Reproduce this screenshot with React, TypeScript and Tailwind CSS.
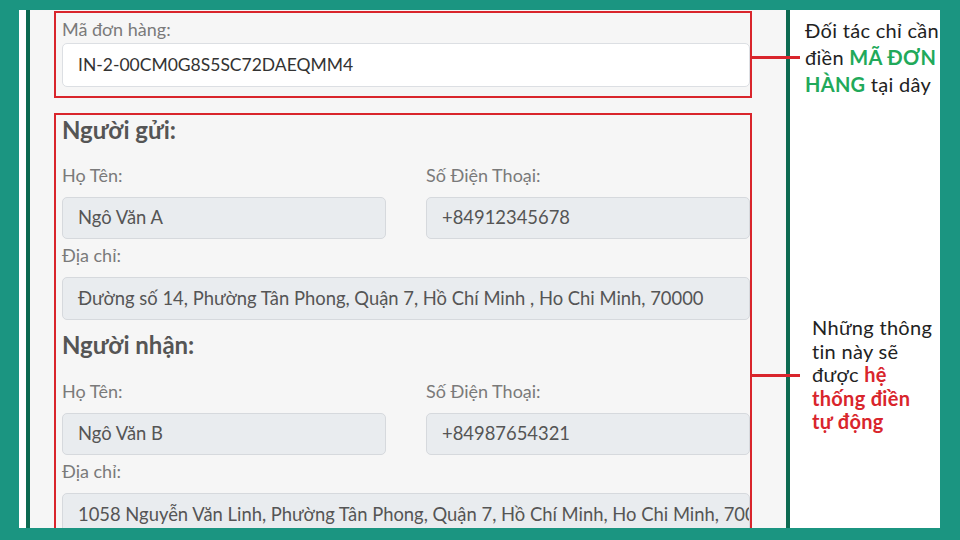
import React from "react";

const F = { fontFamily: "Lato, 'Noto Sans', sans-serif" };

function Field({ value, className = "" }: { value: string; className?: string }) {
  return (
    <div
      className={`h-[42px] bg-[#e9ecef] border border-[#d6d9dd] rounded-[5px] pl-[15px] flex items-center text-[18.4px] text-[#555] whitespace-nowrap overflow-hidden ${className}`}
    >
      {value}
    </div>
  );
}

function Label({ children, className = "" }: { children: React.ReactNode; className?: string }) {
  return (
    <div className={`h-[24px] flex items-center text-[18px] text-[#7a7a7a] ${className}`}>{children}</div>
  );
}

export default function App() {
  return (
    <div className="relative w-[960px] h-[540px] bg-[#1b9581] overflow-hidden" style={F}>
      <div className="absolute left-[19px] top-[10px] w-[921px] h-[518px] flex">
        <div className="w-[7px] bg-white" />
        <div className="w-[4px] bg-[#0d6a51]" />
        <div className="flex-1 bg-[#f6f6f6] pl-[24px] pr-[34px] overflow-hidden">
          {/* box 1 */}
          <div className="mt-[1px] h-[87px] border-2 border-[#d9252c] pl-[6px] pr-[0px]">
            <div className="h-[30px] flex items-center pt-[2px] text-[18px] text-[#7a7a7a]">Mã đơn hàng:</div>
            <div className="h-[44px] bg-white border border-[#dcdfe3] rounded-[5px] pl-[15px] flex items-center text-[17.5px] text-[#333]">
              IN-2-00CM0G8S5SC72DAEQMM4
            </div>
          </div>
          {/* box 2 */}
          <div className="mt-[15px] border-2 border-[#d9252c] pl-[6px] pr-[0px] pb-[40px]">
            <div className="h-[30px] flex items-center text-[24px] font-bold text-[#555]">Người gửi:</div>
            <div className="grid grid-cols-2 gap-x-[40px] mt-[18px]">
              <div>
                <Label>Họ Tên:</Label>
                <Field value="Ngô Văn A" className="mt-[10px]" />
              </div>
              <div>
                <Label>Số Điện Thoại:</Label>
                <Field value="+84912345678" className="mt-[10px] pl-[9px]" />
              </div>
            </div>
            <div className="h-[32px] flex items-center text-[18px] text-[#7a7a7a]">Địa chỉ:</div>
            <Field value="Đường số 14, Phường Tân Phong, Quận 7, Hồ Chí Minh , Ho Chi Minh, 70000" className="mt-[6px] h-[43px]" />
            <div className="h-[50px] flex items-center text-[24px] font-bold text-[#555]">Người nhận:</div>
            <div className="grid grid-cols-2 gap-x-[40px] mt-[9px]">
              <div>
                <Label>Họ Tên:</Label>
                <Field value="Ngô Văn B" className="mt-[10px]" />
              </div>
              <div>
                <Label>Số Điện Thoại:</Label>
                <Field value="+84987654321" className="mt-[10px] pl-[9px]" />
              </div>
            </div>
            <div className="h-[32px] flex items-center text-[18px] text-[#7a7a7a]">Địa chỉ:</div>
            <Field value="1058 Nguyễn Văn Linh, Phường Tân Phong, Quận 7, Hồ Chí Minh, Ho Chi Minh, 70000" className="mt-[6px] h-[43px]" />
          </div>
        </div>
        <div className="w-[4px] bg-[#0d6a51]" />
        <div className="w-[150px] bg-white text-[#222] whitespace-nowrap tracking-[0.3px]">
          <div className="pl-[15px] pt-[7px] text-[20px] leading-[27px]">
            Đối tác chỉ cần
            <br />
            điền <span className="font-bold text-[#21a95a]">MÃ ĐƠN</span>
            <br />
            <span className="font-bold text-[#21a95a]">HÀNG</span> tại dây
          </div>
          <div className="pl-[22px] mt-[218px] text-[20px] leading-[23.5px]">
            Những thông
            <br />
            tin này sẽ
            <br />
            được <span className="font-bold text-[#d9252c]">hệ</span>
            <br />
            <span className="font-bold text-[#d9252c]">thống điền</span>
            <br />
            <span className="font-bold text-[#d9252c]">tự động</span>
          </div>
        </div>
      </div>
      {/* connectors */}
      <div className="absolute left-[752px] top-[56px] w-[48px] h-[3px] bg-[#d9252c]" />
      <div className="absolute left-[752px] top-[374px] w-[48px] h-[3px] bg-[#d9252c]" />
    </div>
  );
}
